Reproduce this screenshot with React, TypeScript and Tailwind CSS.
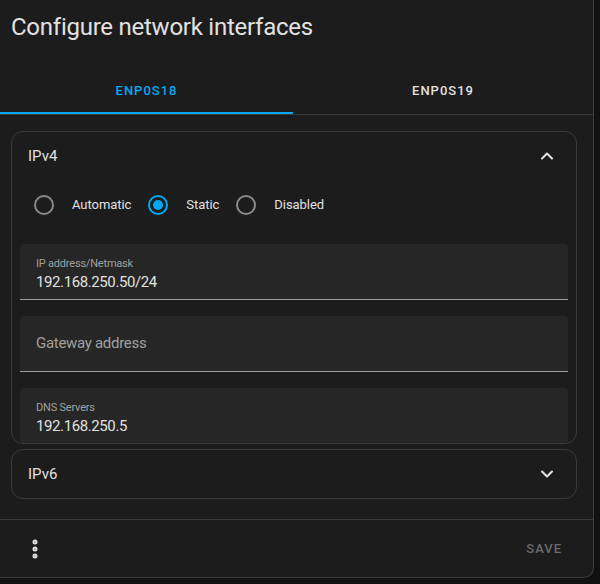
import { ChevronDown, ChevronUp, EllipsisVertical } from "lucide-react";

const radios = [
  { label: "Automatic", checked: false },
  { label: "Static", checked: true },
  { label: "Disabled", checked: false },
];

function Radio({ label, checked }: { label: string; checked: boolean }) {
  return (
    <div className="flex items-center h-10">
      <div className="w-10 h-10 flex items-center justify-center">
        <div
          className={
            checked
              ? "w-5 h-5 rounded-full border-2 border-[#03a9f4] flex items-center justify-center"
              : "w-5 h-5 rounded-full border-2 border-[#8a8a8a]"
          }
        >
          {checked && <div className="w-2.5 h-2.5 rounded-full bg-[#03a9f4]" />}
        </div>
      </div>
      <span className="pl-2 pr-[7px] text-[13px] tracking-[-0.05px] text-[#e1e1e1]">{label}</span>
    </div>
  );
}

function Field({ label, value }: { label: string; value?: string }) {
  return (
    <div className="h-14 bg-[#262626] rounded-t-[4px] border-b border-[#9a9a9a] px-4 flex flex-col justify-center">
      {value ? (
        <>
          <span className="text-[11px] leading-4 tracking-[-0.2px] text-[#a0a0a0] mt-1">{label}</span>
          <span className="text-[15px] leading-5 tracking-[-0.4px] text-[#e1e1e1]">{value}</span>
        </>
      ) : (
        <span className="text-[15px] tracking-[-0.3px] text-[#a0a0a0]">{label}</span>
      )}
    </div>
  );
}

export default function App() {
  return (
    <div className="w-[600px] h-[584px] bg-[#111111] font-['Roboto',sans-serif]">
      <div className="w-[594px] h-[578px] bg-[#1c1c1c] border-r border-b border-[#3c3c3c] rounded-br-[10px] flex flex-col overflow-hidden">
        {/* ============= Header ============= */}
        <h1 className="pt-[11px] pl-[11px] text-[24px] leading-8 tracking-[-0.25px] text-[#e1e1e1] h-[66px]">
          Configure network interfaces
        </h1>

        {/* ============= Tabs ============= */}
        <div className="flex border-b border-[#3a3a3a]">
          <div className="w-[293px] h-12 flex flex-col">
            <div className="flex-1 pt-1 flex items-center justify-center text-[13px] font-medium tracking-[1px] text-[#03a9f4]">
              ENP0S18
            </div>
            <div className="h-[2px] bg-[#03a9f4]" />
          </div>
          <div className="flex-1 h-12 pt-[2px] flex items-center justify-center text-[13px] font-medium tracking-[1px] text-[#e1e1e1]">
            ENP0S19
          </div>
        </div>

        {/* ============= Content ============= */}
        <div className="pl-[11px] pr-4 pt-4 flex flex-col gap-[5px]">
          <div className="h-[313px] border border-[#3a3a3a] rounded-xl overflow-hidden">
            <div className="h-12 flex items-center justify-between pl-4 pr-[19px]">
              <span className="text-[15px] text-[#e1e1e1]">IPv4</span>
              <ChevronUp size={20} strokeWidth={2.5} className="text-[#e1e1e1]" />
            </div>
            <div className="flex pl-3 mt-[5px]">
              {radios.map((r) => (
                <Radio key={r.label} label={r.label} checked={r.checked} />
              ))}
            </div>
            <div className="px-2 mt-[19px] flex flex-col gap-4">
              <Field label="IP address/Netmask" value="192.168.250.50/24" />
              <Field label="Gateway address" />
              <Field label="DNS Servers" value="192.168.250.5" />
            </div>
          </div>

          <div className="h-[50px] border border-[#3a3a3a] rounded-xl flex items-center justify-between pl-4 pr-[19px]">
            <span className="text-[15px] text-[#e1e1e1]">IPv6</span>
            <ChevronDown size={20} strokeWidth={2.5} className="text-[#e1e1e1]" />
          </div>
        </div>

        {/* ============= Footer ============= */}
        <div className="mt-auto border-t border-[#3a3a3a] h-[58px] flex items-center justify-between pl-[23px] pr-[31px]">
          <EllipsisVertical size={24} strokeWidth={3} className="text-[#e1e1e1]" />
          <span className="text-[13px] font-medium tracking-[1px] text-[#6a6a6a]">SAVE</span>
        </div>
      </div>
    </div>
  );
}
